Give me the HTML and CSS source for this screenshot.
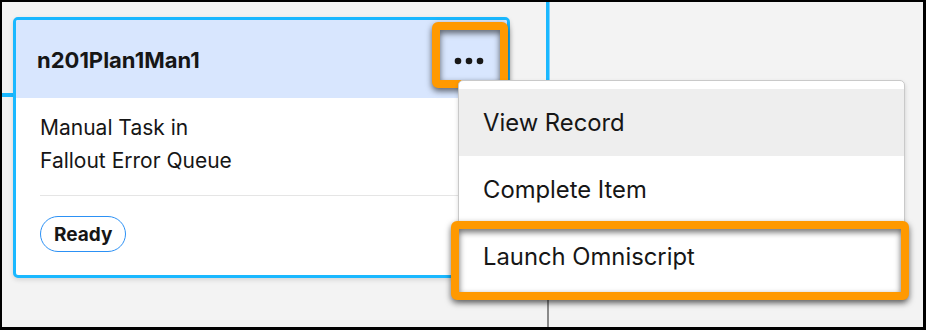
FILE: index.html
```html
<!DOCTYPE html>
<html>
<head>
<meta charset="utf-8">
<link rel="stylesheet" href="styles.css">
</head>
<body>
<div class="frame">
  <div class="wire wire-left"></div>
  <div class="wire wire-top"></div>
  <div class="wire wire-bottom"></div>

  <div class="card">
    <div class="card-header">
      <div class="card-title">n201Plan1Man1</div>
      <button class="more-btn" aria-label="More actions">
        <svg class="dots" width="30" height="8" viewBox="0 0 30 8">
          <circle cx="4" cy="4" r="3.3" fill="#181818"/>
          <circle cx="15" cy="4" r="3.3" fill="#181818"/>
          <circle cx="26" cy="4" r="3.3" fill="#181818"/>
        </svg>
      </button>
    </div>
    <div class="card-body">
      <div class="card-text">Manual Task in<br>Fallout Error Queue</div>
      <div class="divider"></div>
      <span class="badge">Ready</span>
    </div>
  </div>

  <div class="menu">
    <div class="menu-item active">View Record</div>
    <div class="menu-item">Complete Item</div>
    <div class="menu-item highlighted">Launch Omniscript</div>
  </div>
</div>
</body>
</html>
```

FILE: styles.css
```css
* { box-sizing: border-box; }

html, body {
  margin: 0;
  padding: 0;
  background: #000;
}

.frame {
  position: relative;
  width: 926px;
  height: 330px;
  border: 2px solid #000;
  border-right-width: 3px;
  border-bottom-width: 3px;
  background: #f3f3f3;
  overflow: hidden;
  padding: 15px 0 0 11px;
  font-family: Inter, "Liberation Sans", sans-serif;
  color: #161616;
}

.wire {
  position: absolute;
}
.wire-left {
  left: 0;
  top: 91px;
  width: 12px;
  height: 4px;
  background: #1ab8ff;
}
.wire-top {
  left: 544px;
  top: 0;
  width: 4px;
  height: 78px;
  background: #1ab8ff;
  border-right: 1px solid #7fd3ff;
}
.wire-bottom {
  left: 545px;
  top: 290px;
  width: 2px;
  height: 40px;
  background: #8a8a8a;
}

.card {
  position: relative;
  width: 497px;
  border: 3px solid #1ab8ff;
  border-radius: 5px;
  background: #fff;
  box-shadow: 0 2px 5px rgba(0, 0, 0, 0.12);
}

.card-header {
  display: flex;
  align-items: center;
  justify-content: space-between;
  height: 78px;
  padding-left: 21px;
  background: #d8e6fe;
  border-radius: 2px 2px 0 0;
}

.card-title {
  font-size: 22px;
  font-weight: 700;
  padding-top: 2px;
}

.more-btn {
  position: relative;
  align-self: flex-start;
  margin-top: 2px;
  margin-right: -1px;
  width: 76px;
  height: 66px;
  border: 0;
  padding: 12px 0 0 0;
  background: transparent;
  display: flex;
  align-items: center;
  justify-content: center;
  cursor: pointer;
}
.more-btn::after {
  content: "";
  position: absolute;
  inset: 0;
  border: 8px solid #ff9900;
  border-radius: 6px;
  filter: drop-shadow(0 3px 3px rgba(0, 0, 0, 0.6));
}
.dots { display: block; margin-left: -2px; }

.card-body {
  padding: 13px 24px 23px 24px;
}

.card-text {
  font-size: 21px;
  line-height: 33px;
}

.divider {
  height: 1px;
  background: #e5e5e5;
  margin: 18px 0 20px;
}

.badge {
  display: inline-flex;
  align-items: center;
  height: 36px;
  padding: 0 13px;
  border: 1.5px solid #2c91f5;
  border-radius: 18px;
  font-size: 19px;
  font-weight: 700;
}

.menu {
  position: absolute;
  left: 456px;
  top: 78px;
  width: 447px;
  padding: 8px 0;
  background: #fff;
  border: 1px solid #c9c9c9;
  border-radius: 5px;
  box-shadow: 0 2px 4px rgba(0, 0, 0, 0.15);
}

.menu-item {
  position: relative;
  display: flex;
  align-items: center;
  height: 67px;
  padding-left: 24px;
  font-size: 23.8px;
}
.menu-item.active {
  background: #eeeeee;
}
.menu-item.highlighted::after {
  content: "";
  position: absolute;
  left: -8px;
  right: -5px;
  top: -2px;
  bottom: -10px;
  border: 8px solid #ff9900;
  border-radius: 6px;
  filter: drop-shadow(0 3px 3px rgba(0, 0, 0, 0.6));
}
```
